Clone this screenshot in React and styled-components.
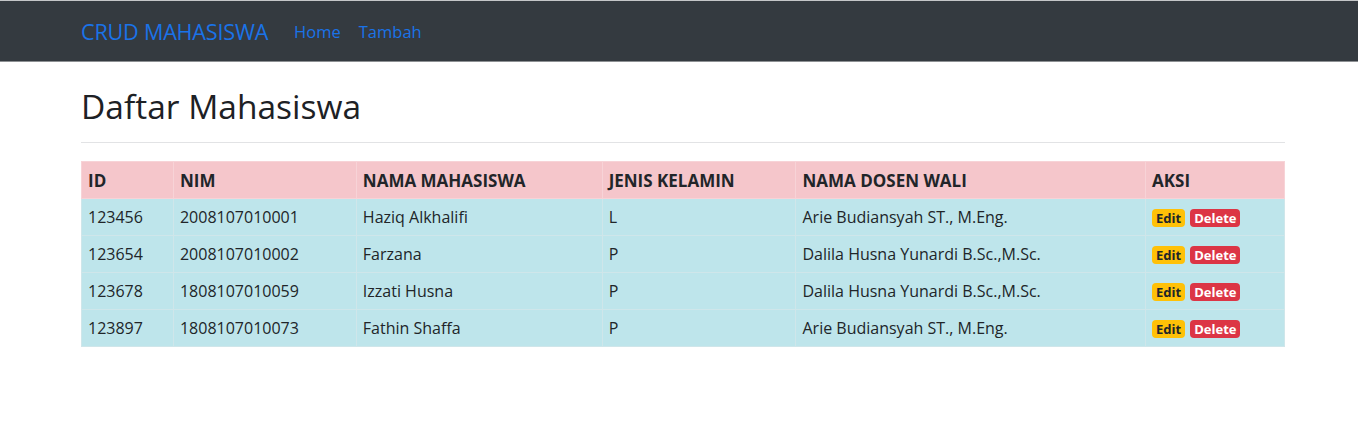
import styled, { createGlobalStyle } from 'styled-components';

const GlobalStyle = createGlobalStyle`
  * { box-sizing: border-box; }
  body {
    margin: 0;
    background: #ffffff;
    color: #212529;
    font-family: "Open Sans", "Noto Sans", sans-serif;
    font-size: 16px;
  }
`;

const Navbar = styled.nav`
  height: 62px;
  background-color: #343a40;
  border-top: 1px solid #c4c6c8;
  border-bottom: 1px solid #8d9093;
  display: flex;
  align-items: center;
  padding: 0 81px;
  gap: 26px;
`;

const Brand = styled.a`
  color: #1a73e8;
  font-size: 21.6px;
  text-decoration: none;
  letter-spacing: -0.2px;
`;

const NavLinks = styled.div`
  display: flex;
  gap: 18px;
`;

const NavLink = styled.a`
  color: #1a73e8;
  font-size: 16.5px;
  text-decoration: none;
`;

const Container = styled.main`
  padding: 0 73px 0 81px;
`;

const Title = styled.h1`
  margin: 0;
  padding-top: 24px;
  height: 81px;
  font-size: 33.5px;
  font-weight: 500;
  line-height: 1.2;
  color: #1d2125;
  border-bottom: 1px solid #e2e3e5;
`;

const Table = styled.table`
  margin-top: 18px;
  width: 100%;
  border-collapse: collapse;
`;

const HeadCell = styled.th`
  background-color: #f5c6cb;
  height: 37px;
  padding: 0 6px;
  text-align: left;
  font-weight: 700;
  font-size: 17px;
  border: 1px solid #f7d3d7;
  width: ${(props) => props.w}px;
`;

const Cell = styled.td`
  background-color: #bee5eb;
  height: 37px;
  padding: 0 6px;
  font-size: 16px;
  border: 1px solid #cfe6ea;
`;

const Badge = styled.span`
  display: inline-block;
  padding: 0 4px;
  margin-right: 5px;
  border-radius: 4px;
  font-size: 13px;
  font-weight: 700;
  line-height: 18px;
  background-color: ${(props) => (props.danger ? '#dc3545' : '#ffc107')};
  color: ${(props) => (props.danger ? '#ffffff' : '#212529')};
`;

const columns = [
  ['ID', 92],
  ['NIM', 183],
  ['NAMA MAHASISWA', 246],
  ['JENIS KELAMIN', 194],
  ['NAMA DOSEN WALI', 350],
  ['AKSI', 139],
];

const rows = [
  ['123456', '2008107010001', 'Haziq Alkhalifi', 'L', 'Arie Budiansyah ST., M.Eng.'],
  ['123654', '2008107010002', 'Farzana', 'P', 'Dalila Husna Yunardi B.Sc.,M.Sc.'],
  ['123678', '1808107010059', 'Izzati Husna', 'P', 'Dalila Husna Yunardi B.Sc.,M.Sc.'],
  ['123897', '1808107010073', 'Fathin Shaffa', 'P', 'Arie Budiansyah ST., M.Eng.'],
];

const App = () => {
  return (
    <>
      <GlobalStyle />
      <Navbar>
        <Brand href="#">CRUD MAHASISWA</Brand>
        <NavLinks>
          <NavLink href="#">Home</NavLink>
          <NavLink href="#">Tambah</NavLink>
        </NavLinks>
      </Navbar>
      <Container>
        <Title>Daftar Mahasiswa</Title>
        <Table>
          <thead>
            <tr>
              {columns.map(([label, w]) => (
                <HeadCell key={label} w={w}>{label}</HeadCell>
              ))}
            </tr>
          </thead>
          <tbody>
            {rows.map((row) => (
              <tr key={row[0]}>
                {row.map((value, i) => (
                  <Cell key={i}>{value}</Cell>
                ))}
                <Cell>
                  <Badge>Edit</Badge>
                  <Badge danger>Delete</Badge>
                </Cell>
              </tr>
            ))}
          </tbody>
        </Table>
      </Container>
    </>
  );
};

export default App;
